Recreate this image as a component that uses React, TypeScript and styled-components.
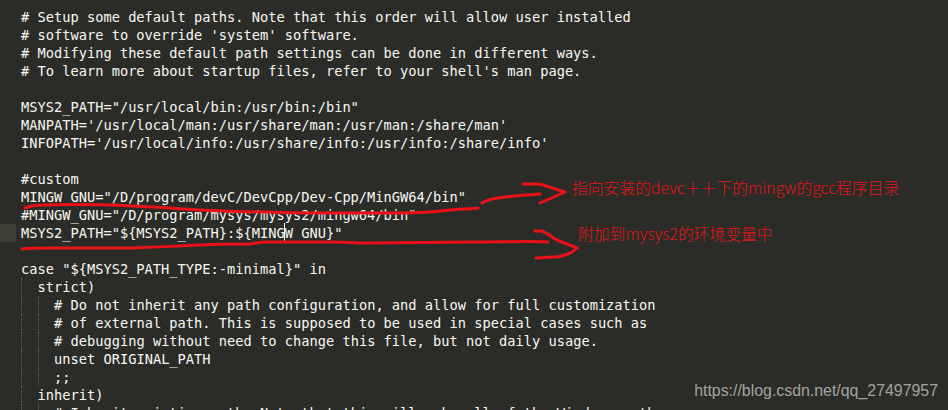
import React from 'react'
import styled, { createGlobalStyle } from 'styled-components'

const GlobalStyle = createGlobalStyle`
  html, body {
    margin: 0;
    padding: 0;
    background: #2b2c27;
  }
`

const codeLines = [
  { text: "# Setup some default paths. Note that this order will allow user installed" },
  { text: "# software to override 'system' software." },
  { text: "# Modifying these default path settings can be done in different ways." },
  { text: "# To learn more about startup files, refer to your shell's man page." },
  { text: "" },
  { text: 'MSYS2_PATH="/usr/local/bin:/usr/bin:/bin"' },
  { text: "MANPATH='/usr/local/man:/usr/share/man:/usr/man:/share/man'" },
  { text: "INFOPATH='/usr/local/info:/usr/share/info:/usr/info:/share/info'" },
  { text: "" },
  { text: "#custom" },
  { text: 'MINGW_GNU="/D/program/devC/DevCpp/Dev-Cpp/MinGW64/bin"' },
  { text: '#MINGW_GNU="/D/program/mysys/mysys2/mingw64/bin"' },
  { text: 'MSYS2_PATH="${MSYS2_PATH}:${MINGW_GNU}"', current: true },
  { text: "" },
  { text: 'case "${MSYS2_PATH_TYPE:-minimal}" in' },
  { text: "strict)", depth: 1 },
  { text: "# Do not inherit any path configuration, and allow for full customization", depth: 2 },
  { text: "# of external path. This is supposed to be used in special cases such as", depth: 2 },
  { text: "# debugging without need to change this file, but not daily usage.", depth: 2 },
  { text: "unset ORIGINAL_PATH", depth: 2 },
  { text: ";;", depth: 2 },
  { text: "inherit)", depth: 1 },
  { text: "# Inherit existing path. Note that this will make all of the Windows path", depth: 2 },
]

const Screen = styled.div`
  position: relative;
  width: 948px;
  height: 410px;
  overflow: hidden;
  background: #2b2c27;
`

const Code = styled.div`
  display: flex;
  flex-direction: column;
  padding-top: 8px;
`

const Row = styled.div<{ $current?: boolean }>`
  display: flex;
  height: 18px;
  line-height: 18px;
  font-family: "DejaVu Sans Mono", monospace;
  font-size: 13.7px;
  color: #f8f8f2;
  white-space: pre;
  &::before {
    content: '';
    width: 16px;
    margin-right: 5px;
    flex: none;
    background: ${p => (p.$current ? '#3f3f38' : 'transparent')};
  }
`

const Indent = styled.span`
  width: 16.5px;
  flex: none;
  box-sizing: border-box;
  border-left: 1px dotted #5c5c55;
`

const Annotations = styled.svg`
  position: absolute;
  left: 0;
  top: 0;
  pointer-events: none;
`

const Note = styled.span<{ $left: number; $top: number }>`
  position: absolute;
  left: ${p => p.$left}px;
  top: ${p => p.$top}px;
  font-family: "Noto Sans CJK SC", "Liberation Sans", sans-serif;
  font-size: 15.8px;
  font-weight: 300;
  line-height: 20px;
  color: #e2141c;
  white-space: nowrap;
`

const Caret = styled.i`
  position: absolute;
  left: 284px;
  top: 223px;
  width: 1px;
  height: 18px;
  background: #f8f8f2;
`

const Watermark = styled.span`
  position: absolute;
  right: 10px;
  top: 381px;
  font-family: "Liberation Sans", sans-serif;
  font-size: 15.9px;
  line-height: 20px;
  color: #a3a39f;
  white-space: nowrap;
`

const App = () => (
  <Screen>
    <GlobalStyle />
    <Code>
      {codeLines.map((line, i) => (
        <Row key={i} $current={line.current}>
          {Array.from({ length: line.depth ?? 0 }, (_, d) => <Indent key={d} />)}
          {line.text}
        </Row>
      ))}
    </Code>
    <Caret />
    <Annotations width="948" height="410" fill="none" stroke="#ec1018" strokeWidth="3" strokeLinecap="round" strokeLinejoin="round">
      <path d="M25 208 C30 206 36 205 43 205 C80 204 110 205 133 206 C160 207 180 209 200 210 C225 211 245 212 267 212 C290 213 310 213 333 213 C355 213 380 213 400 213 C420 213 435 212 450 210 C460 209 470 209 478 208" />
      <path d="M482 203 C487 200 491 199 497 198 C510 196 525 195 540 194" />
      <path d="M523 184 L538 184 C545 185 555 189 565 192 L540 203" />
      <path d="M22 249 C30 248 40 248 50 248 C80 248 110 248 133 248 C155 247 180 246 200 245 C220 244 235 244 250 244 C255 243 260 242 267 242 C290 242 310 242 333 242 C345 242 355 243 367 243 C400 243 440 242 474 242 C500 242 525 241 548 242" />
      <path d="M535 231 L542 231 C547 233 552 237 557 240 L577 248 C574 251 571 253 568 254 C563 256 558 257 553 257 L536 258" />
    </Annotations>
    <Note $left={572} $top={178}>指向安装的devc＋＋下的mingw的gcc程序目录</Note>
    <Note $left={578} $top={224}>附加到mysys2的环境变量中</Note>
    <Watermark>https://blog.csdn.net/qq_27497957</Watermark>
  </Screen>
)

export default App
